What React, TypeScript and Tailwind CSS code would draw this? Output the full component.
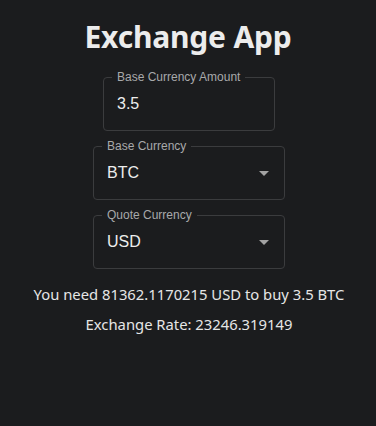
import React from "react";

function Field({ label, value, width, select }: { label: string; value: string; width: string; select?: boolean }) {
  return (
    <div className={`relative h-[54px] ${width} rounded-[4px] border border-[#3b3c3e] flex items-center pl-[13px] pr-[14px]`}>
      <span
        className="absolute left-[8px] top-[-8px] px-[5px] bg-[#1b1c1e] text-[12px] leading-[14px] text-[#a8a9ab]"
        style={{ fontFamily: '"Liberation Sans", Arial, sans-serif' }}
      >
        {label}
      </span>
      <span
        className="flex-1 text-[16px] text-[#ededed]"
        style={{ fontFamily: '"Liberation Sans", Arial, sans-serif' }}
      >
        {value}
      </span>
      {select && (
        <svg width="10" height="5" viewBox="0 0 10 5" className="mr-[1px]">
          <path d="M0 0 L10 0 L5 5 Z" fill="#a3a3a3" />
        </svg>
      )}
    </div>
  );
}

export default function App() {
  return (
    <div
      className="w-[376px] h-[426px] bg-[#1b1c1e] flex flex-col items-center"
      style={{ fontFamily: '"Noto Sans", "Open Sans", sans-serif' }}
    >
      <h1 className="mt-[17px] text-[30px] leading-[40px] font-bold text-[#ececec] tracking-[-0.2px]">Exchange App</h1>
      <div className="mt-[20px] ml-[2px] flex flex-col items-center gap-[15px]">
        <Field label="Base Currency Amount" value="3.5" width="w-[172px]" />
        <Field label="Base Currency" value="BTC" width="w-[192px]" select />
        <Field label="Quote Currency" value="USD" width="w-[192px]" select />
      </div>
      <p className="mt-[14px] ml-[2px] text-[14.8px] leading-[22px] text-[#e6e6e6]">You need 81362.1170215 USD to buy 3.5 BTC</p>
      <p className="mt-[8px] ml-[2px] text-[14.8px] leading-[22px] text-[#e6e6e6]">Exchange Rate: 23246.319149</p>
    </div>
  );
}
